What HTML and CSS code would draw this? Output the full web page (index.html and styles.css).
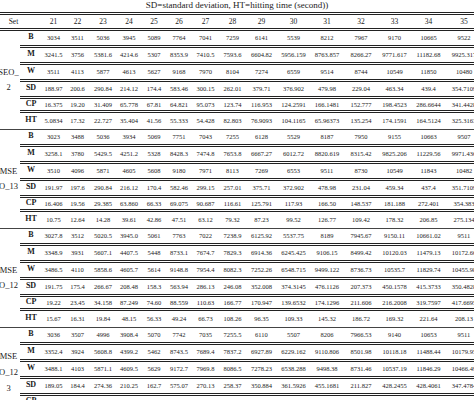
FILE: index.html
```html
<!DOCTYPE html>
<html>
<head>
<meta charset="utf-8">
<link rel="stylesheet" href="styles.css">
</head>
<body>
<div class="title">SD=standard deviation, HT=hitting time (second))</div>
<table class="data">
<colgroup>
<col class="c-set"><col class="c-lab">
<col class="w23"><col class="w25"><col class="w26"><col class="w26"><col class="w24">
<col class="w26"><col class="w27"><col class="w27"><col class="w31"><col class="w33">
<col class="w34"><col class="w34"><col class="w33"><col class="w35"><col class="w36">
</colgroup>
<thead>
<tr class="hd"><th colspan="2" class="sethd">Set</th><th>21</th><th>22</th><th>23</th><th>24</th><th>25</th><th>26</th><th>27</th><th>28</th><th>29</th><th>30</th><th>31</th><th>32</th><th>33</th><th>34</th><th>35</th></tr>
</thead>
<tbody>
<tr class="rb"><td class="set" rowspan="6">SEO_<br>2</td><th class="lab">B</th><td>3034</td><td>3511</td><td>5036</td><td>3945</td><td>5089</td><td>7764</td><td>7041</td><td>7259</td><td>6141</td><td>5539</td><td>8212</td><td>7967</td><td>9170</td><td>10665</td><td>9522</td></tr>
<tr class="rb"><th class="lab">M</th><td>3241.5</td><td>3756</td><td>5381.6</td><td>4214.6</td><td>5307</td><td>8353.9</td><td>7410.5</td><td>7593.6</td><td>6604.82</td><td>5956.159</td><td>8763.857</td><td>8266.27</td><td>9771.617</td><td>11182.68</td><td>9925.317</td></tr>
<tr class="rb"><th class="lab">W</th><td>3511</td><td>4113</td><td>5877</td><td>4613</td><td>5627</td><td>9168</td><td>7970</td><td>8104</td><td>7274</td><td>6559</td><td>9514</td><td>8744</td><td>10549</td><td>11850</td><td>10480</td></tr>
<tr class="rb"><th class="lab">SD</th><td>188.97</td><td>200.6</td><td>290.84</td><td>214.12</td><td>174.4</td><td>583.46</td><td>300.15</td><td>262.01</td><td>379.71</td><td>376.902</td><td>479.98</td><td>229.04</td><td>463.34</td><td>439.4</td><td>354.7109</td></tr>
<tr class="rc"><th class="lab">CP</th><td>16.375</td><td>19.20</td><td>31.409</td><td>65.778</td><td>67.81</td><td>64.821</td><td>95.073</td><td>123.74</td><td>116.953</td><td>124.2591</td><td>166.1481</td><td>152.777</td><td>198.4523</td><td>286.6644</td><td>341.4428</td></tr>
<tr class="rh"><th class="lab">HT</th><td>5.0834</td><td>17.32</td><td>22.727</td><td>35.404</td><td>41.56</td><td>55.333</td><td>54.428</td><td>82.803</td><td>76.9093</td><td>104.1165</td><td>65.96373</td><td>135.254</td><td>174.1591</td><td>164.5124</td><td>325.3163</td></tr>

<tr class="rb"><td class="set" rowspan="6">MSE<br>O_13</td><th class="lab">B</th><td>3023</td><td>3488</td><td>5036</td><td>3934</td><td>5069</td><td>7751</td><td>7043</td><td>7255</td><td>6128</td><td>5529</td><td>8187</td><td>7950</td><td>9155</td><td>10663</td><td>9507</td></tr>
<tr class="rb"><th class="lab">M</th><td>3258.1</td><td>3780</td><td>5429.5</td><td>4251.2</td><td>5328</td><td>8428.3</td><td>7474.8</td><td>7653.8</td><td>6667.27</td><td>6012.72</td><td>8820.619</td><td>8315.42</td><td>9825.206</td><td>11229.56</td><td>9971.436</td></tr>
<tr class="rb"><th class="lab">W</th><td>3510</td><td>4096</td><td>5871</td><td>4605</td><td>5608</td><td>9180</td><td>7971</td><td>8113</td><td>7269</td><td>6553</td><td>9511</td><td>8730</td><td>10549</td><td>11843</td><td>10482</td></tr>
<tr class="rb"><th class="lab">SD</th><td>191.97</td><td>197.6</td><td>290.84</td><td>216.12</td><td>170.4</td><td>582.46</td><td>299.15</td><td>257.01</td><td>375.71</td><td>372.902</td><td>478.98</td><td>231.04</td><td>459.34</td><td>437.4</td><td>351.7109</td></tr>
<tr class="rc"><th class="lab">CP</th><td>16.406</td><td>19.56</td><td>29.385</td><td>63.860</td><td>66.33</td><td>69.075</td><td>90.687</td><td>116.61</td><td>125.791</td><td>117.93</td><td>166.50</td><td>148.537</td><td>181.188</td><td>272.401</td><td>354.383</td></tr>
<tr class="rh"><th class="lab">HT</th><td>10.75</td><td>12.64</td><td>14.28</td><td>39.61</td><td>42.86</td><td>47.51</td><td>63.12</td><td>79.32</td><td>87.23</td><td>99.52</td><td>126.77</td><td>109.42</td><td>178.32</td><td>206.85</td><td>275.134</td></tr>

<tr class="rb"><td class="set" rowspan="6">MSE<br>O_12</td><th class="lab">B</th><td>3027.8</td><td>3512</td><td>5020.5</td><td>3945.0</td><td>5061</td><td>7763</td><td>7022</td><td>7238.9</td><td>6125.92</td><td>5537.75</td><td>8189</td><td>7945.67</td><td>9150.11</td><td>10661.02</td><td>9511</td></tr>
<tr class="rb"><th class="lab">M</th><td>3348.9</td><td>3931</td><td>5607.1</td><td>4407.5</td><td>5448</td><td>8733.1</td><td>7674.7</td><td>7829.3</td><td>6914.36</td><td>6245.425</td><td>9106.15</td><td>8499.42</td><td>10120.03</td><td>11479.13</td><td>10172.66</td></tr>
<tr class="rb"><th class="lab">W</th><td>3486.5</td><td>4110</td><td>5858.6</td><td>4605.7</td><td>5614</td><td>9148.8</td><td>7954.4</td><td>8082.3</td><td>7252.26</td><td>6548.715</td><td>9499.122</td><td>8736.73</td><td>10535.7</td><td>11829.74</td><td>10455.98</td></tr>
<tr class="rb"><th class="lab">SD</th><td>191.75</td><td>175.4</td><td>266.67</td><td>208.48</td><td>158.3</td><td>563.94</td><td>286.13</td><td>246.08</td><td>352.008</td><td>374.3145</td><td>476.1126</td><td>207.373</td><td>450.1578</td><td>415.3733</td><td>350.4828</td></tr>
<tr class="rc"><th class="lab">CP</th><td>19.22</td><td>23.45</td><td>34.158</td><td>87.249</td><td>74.60</td><td>88.559</td><td>110.63</td><td>166.77</td><td>170.947</td><td>139.6532</td><td>174.1296</td><td>211.606</td><td>216.2008</td><td>319.7597</td><td>417.6695</td></tr>
<tr class="rh"><th class="lab">HT</th><td>15.67</td><td>16.31</td><td>19.84</td><td>48.15</td><td>56.33</td><td>49.24</td><td>66.73</td><td>108.26</td><td>96.35</td><td>109.33</td><td>145.32</td><td>186.72</td><td>169.32</td><td>221.64</td><td>208.13</td></tr>

<tr class="rb"><td class="set last" rowspan="5">MSE<br>O_12<br>3</td><th class="lab">B</th><td>3036</td><td>3507</td><td>4996</td><td>3908.4</td><td>5070</td><td>7742</td><td>7035</td><td>7255.5</td><td>6110</td><td>5507</td><td>8206</td><td>7966.53</td><td>9140</td><td>10653</td><td>9511</td></tr>
<tr class="rb"><th class="lab">M</th><td>3352.4</td><td>3924</td><td>5608.8</td><td>4399.2</td><td>5462</td><td>8743.5</td><td>7689.4</td><td>7837.2</td><td>6927.89</td><td>6229.162</td><td>9110.806</td><td>8501.98</td><td>10118.18</td><td>11488.44</td><td>10179.95</td></tr>
<tr class="rb"><th class="lab">W</th><td>3488.1</td><td>4103</td><td>5871.1</td><td>4609.5</td><td>5629</td><td>9172.7</td><td>7969.8</td><td>8086.5</td><td>7278.23</td><td>6538.288</td><td>9498.38</td><td>8731.46</td><td>10537.19</td><td>11846.29</td><td>10466.49</td></tr>
<tr class="rb"><th class="lab">SD</th><td>189.05</td><td>184.4</td><td>274.36</td><td>210.25</td><td>162.7</td><td>575.07</td><td>270.13</td><td>258.37</td><td>350.884</td><td>361.5926</td><td>455.1681</td><td>211.827</td><td>428.2455</td><td>428.4061</td><td>347.4784</td></tr>
<tr class="rc"><th class="lab">CP</th><td>22.346</td><td>22.38</td><td>47.396</td><td>95.905</td><td>102.6</td><td>88.687</td><td>96.045</td><td>127.80</td><td>142.176</td><td>132.3567</td><td>246.6578</td><td>241.295</td><td>188.9462</td><td>332.2008</td><td>383.071</td></tr>
</tbody>
</table>
</body>
</html>
```

FILE: styles.css
```css
html, body {
  margin: 0;
  padding: 0;
  background: #ffffff;
  overflow: hidden;
}
body {
  width: 474px;
  height: 400px;
  font-family: "Liberation Serif", "DejaVu Serif", serif;
  color: #222222;
}
.title {
  height: 12px;
  line-height: 10px;
  font-size: 9px;
  text-align: center;
  white-space: nowrap;
}
.data {
  border-collapse: separate;
  border-spacing: 0;
  table-layout: fixed;
  width: 485px;
  margin-left: -3px;
}
.c-set { width: 23px; }
.c-lab { width: 22px; }
.w23 { width: 23px; }
.w24 { width: 24px; }
.w25 { width: 25px; }
.w26 { width: 26px; }
.w27 { width: 27px; }
.w31 { width: 31px; }
.w33 { width: 33px; }
.w34 { width: 34px; }
.w35 { width: 35px; }
.w36 { width: 36px; }

.data th, .data td {
  padding: 0;
  text-align: center;
  white-space: nowrap;
  font-weight: normal;
  vertical-align: middle;
}
.data td {
  font-size: 6.5px;
}
.hd th {
  font-size: 7.5px;
  line-height: 13px;
  border-top: 3px double #222;
  border-bottom: 3px double #222;
}
.hd .sethd {
  padding-right: 12px;
}
.data .lab {
  font-size: 8px;
  font-weight: bold;
  color: #1a1a1a;
  vertical-align: top;
}
.rb td, .rb .lab {
  line-height: 14px;
  border-bottom: 3px double #222;
}
.rb .lab { line-height: 12px; }
.rc td, .rc .lab {
  line-height: 11px;
  border-bottom: 3px double #222;
}
.rc .lab { line-height: 10px; }
.rh td, .rh .lab {
  line-height: 16px;
  border-bottom: 1px solid #444;
}
.rh .lab { line-height: 14px; }
.data td.set {
  font-size: 8.5px;
  line-height: 15px;
  border-bottom: 1px solid #444;
  vertical-align: middle;
}
.data td.set.last {
  border-bottom: 0;
  padding-top: 6px;
  line-height: 16px;
}
```
